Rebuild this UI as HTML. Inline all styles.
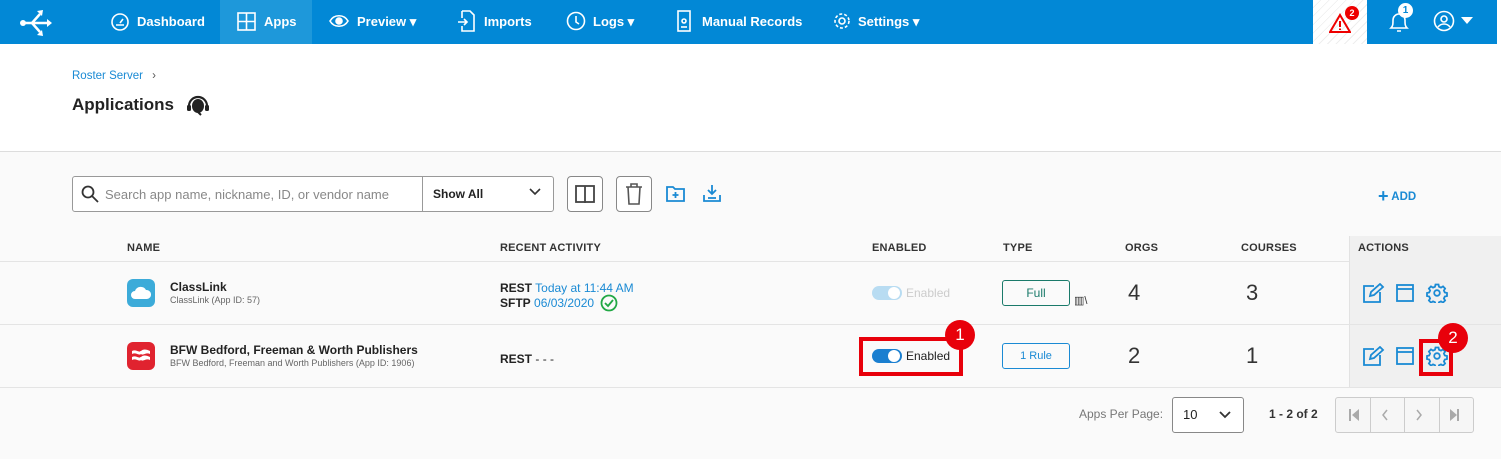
<!DOCTYPE html>
<html><head><meta charset="utf-8"><style>
*{box-sizing:border-box;margin:0;padding:0}
body{width:1501px;height:459px;overflow:hidden;background:#fafafa;font-family:"Liberation Sans",sans-serif;color:#333;position:relative;font-size:13px}
.a{position:absolute}
.nav{left:0;top:0;width:1501px;height:44px;background:#0288d6}
.ni{color:#fff;font-size:13px;font-weight:bold;top:14px;}
.hdr{left:0;top:44px;width:1501px;height:108px;background:#fff;border-bottom:1px solid #ddd}
.th{top:242px;font-size:11px;font-weight:bold;color:#333;letter-spacing:.2px}
.line{left:0;width:1501px;height:1px;background:#e4e4e4}
.blue{color:#1a8ad4}
svg{position:absolute}
</style></head><body>
<div class="a nav"></div>
<div class="a" style="left:220px;top:0;width:92px;height:44px;background:#1e98da"></div>
<svg style="left:18px;top:8px" width="36" height="30" viewBox="0 0 36 30" fill="#fff"><circle cx="5" cy="15" r="3"/><path d="M5 15h24M14 15l8-9M14 15l8 9" stroke="#fff" stroke-width="2.5" fill="none"/><path d="M29 11l5 4-5 4z M19 3l6-1-1 6z M19 27l6 1-1-6z"/></svg>
<svg style="left:110px;top:12px" width="20" height="20" viewBox="0 0 20 20" fill="none" stroke="#fff" stroke-width="1.6"><circle cx="10" cy="10" r="8"/><path d="M10 11l3-4M6 13h8"/></svg>
<div class="a ni" style="left:137px">Dashboard</div>
<svg style="left:237px;top:12px" width="19" height="19" viewBox="0 0 19 19" fill="none" stroke="#fff" stroke-width="1.6"><rect x="1" y="1" width="17" height="17"/><path d="M9.5 1v17M1 9.5h17"/></svg>
<div class="a ni" style="left:264px">Apps</div>
<svg style="left:329px;top:13px" width="20" height="16" viewBox="0 0 20 16" fill="none" stroke="#fff" stroke-width="1.6"><path d="M1 8c4-7 14-7 18 0-4 7-14 7-18 0z"/><circle cx="10" cy="8" r="3" fill="#fff"/></svg>
<div class="a ni" style="left:357px">Preview ▾</div>
<svg style="left:457px;top:10px" width="18" height="22" viewBox="0 0 18 22" fill="none" stroke="#fff" stroke-width="1.6"><path d="M5 1h8l4 4v16H5v-5M5 8V1"/><path d="M1 12h9M7 9l3 3-3 3"/></svg>
<div class="a ni" style="left:484px">Imports</div>
<svg style="left:566px;top:11px" width="20" height="20" viewBox="0 0 20 20" fill="none" stroke="#fff" stroke-width="1.6"><circle cx="10" cy="10" r="8.5"/><path d="M10 5v6l3 2"/></svg>
<div class="a ni" style="left:593px">Logs ▾</div>
<svg style="left:677px;top:10px" width="14" height="22" viewBox="0 0 14 22" fill="none" stroke="#fff" stroke-width="1.6"><rect x="1" y="1" width="12" height="20"/><circle cx="7" cy="11" r="2"/><path d="M4 17h6"/></svg>
<div class="a ni" style="left:702px">Manual Records</div>
<svg style="left:832px;top:11px" width="20" height="20" viewBox="0 0 20 20" fill="none" stroke="#fff" stroke-width="1.6"><circle cx="10" cy="10" r="3"/><circle cx="10" cy="10" r="7" stroke-dasharray="3 2"/></svg>
<div class="a ni" style="left:858px">Settings ▾</div>
<div class="a" style="left:1313px;top:0;width:54px;height:44px;background:repeating-linear-gradient(135deg,#fff 0 5px,#eee 5px 6px)"></div>
<svg style="left:1329px;top:13px" width="22" height="20" viewBox="0 0 22 20" fill="none" stroke="#e00" stroke-width="2"><path d="M11 2L1 19h20z"/><path d="M11 8v6M11 15.5v1.5"/></svg>
<div class="a" style="left:1345px;top:6px;width:14px;height:14px;border-radius:7px;background:#e00;color:#fff;font-size:9px;font-weight:bold;text-align:center;line-height:14px">2</div>
<svg style="left:1388px;top:10px" width="22" height="24" viewBox="0 0 22 24" fill="none" stroke="#fff" stroke-width="1.6"><path d="M3 18c2-2 2-4 2-8a6 6 0 0 1 12 0c0 4 0 6 2 8z M9 21h4"/></svg>
<div class="a" style="left:1398px;top:3px;width:15px;height:15px;border-radius:8px;background:#fff;color:#0288d6;font-size:10px;font-weight:bold;text-align:center;line-height:15px">1</div>
<svg style="left:1433px;top:10px" width="22" height="22" viewBox="0 0 22 22" fill="none" stroke="#fff" stroke-width="1.6"><circle cx="11" cy="11" r="9.5"/><circle cx="11" cy="9" r="3"/><path d="M5 17c3-4 9-4 12 0"/></svg>
<div class="a" style="left:1461px;top:17px;border-left:6px solid transparent;border-right:6px solid transparent;border-top:7px solid #fff"></div>
<div class="a" style="left:1497px;top:0;width:4px;height:44px;background:#fff"></div>

<div class="a hdr"></div>
<div class="a blue" style="left:72px;top:70px;font-size:11.5px">Roster Server <span style="color:#555;margin-left:6px">›</span></div>
<div class="a" style="left:72px;top:95px;font-size:17px;font-weight:bold;color:#222">Applications</div>
<svg style="left:185px;top:94px" width="26" height="22" viewBox="0 0 26 22"><path d="M4 12a9 9 0 0 1 18 0" fill="none" stroke="#222" stroke-width="2.2"/><ellipse cx="13" cy="12" rx="6" ry="7" fill="#222"/><rect x="2" y="11" width="4" height="6" rx="1.5" fill="#222"/><rect x="20" y="11" width="4" height="6" rx="1.5" fill="#222"/><path d="M13 18l3 3" stroke="#222" stroke-width="2"/></svg>

<div class="a" style="left:72px;top:176px;width:482px;height:36px;border:1px solid #999;border-radius:3px;background:#fff"></div>
<div class="a" style="left:422px;top:177px;width:1px;height:34px;background:#999"></div>
<svg style="left:81px;top:185px" width="18" height="18" viewBox="0 0 18 18" fill="none" stroke="#333" stroke-width="1.8"><circle cx="7" cy="7" r="5.5"/><path d="M11 11l6 6"/></svg>
<div class="a" style="left:105px;top:187px;color:#888;font-size:13px">Search app name, nickname, ID, or vendor name</div>
<div class="a" style="left:433px;top:187px;font-weight:bold;font-size:12px;color:#222">Show All</div>
<svg style="left:528px;top:187px" width="14" height="10" viewBox="0 0 14 10" fill="none" stroke="#333" stroke-width="1.6"><path d="M2 2l5 5 5-5"/></svg>
<div class="a" style="left:567px;top:176px;width:36px;height:36px;border:1px solid #888;border-radius:4px;background:#fff"></div>
<svg style="left:575px;top:185px" width="20" height="18" viewBox="0 0 20 18" fill="none" stroke="#444" stroke-width="1.8"><rect x="1" y="1" width="18" height="16"/><path d="M10 1v17"/></svg>
<div class="a" style="left:616px;top:176px;width:36px;height:36px;border:1px solid #888;border-radius:4px;background:#fff"></div>
<svg style="left:625px;top:183px" width="18" height="22" viewBox="0 0 18 22" fill="none" stroke="#555" stroke-width="1.6"><path d="M1 4h16M6 4V1h6v3M3 4l1 17h10l1-17"/></svg>
<svg style="left:666px;top:185px" width="19" height="17" viewBox="0 0 19 17" fill="none" stroke="#1a8ad4" stroke-width="1.8"><path d="M1 2h6l2 2h9v12H1z M9.5 7v6M6.5 10h6"/></svg>
<svg style="left:703px;top:184px" width="18" height="18" viewBox="0 0 18 18" fill="none" stroke="#1a8ad4" stroke-width="1.8"><path d="M9 1v9M5 6l4 4 4-4M1 11v6h16v-6"/><path d="M5 14h8"/></svg>
<div class="a blue" style="left:1378px;top:186px;font-weight:bold;font-size:11.5px"><span style="font-size:18px;vertical-align:-2px">+</span> ADD</div>

<div class="a" style="left:1349px;top:236px;width:152px;height:151px;background:#f0f0f0;border-left:1px solid #e2e2e2"></div>
<div class="a th" style="left:127px">NAME</div>
<div class="a th" style="left:500px">RECENT ACTIVITY</div>
<div class="a th" style="left:872px">ENABLED</div>
<div class="a th" style="left:1003px">TYPE</div>
<div class="a th" style="left:1125px">ORGS</div>
<div class="a th" style="left:1241px">COURSES</div>
<div class="a th" style="left:1358px">ACTIONS</div>
<div class="a line" style="top:261px;width:1349px"></div>
<div class="a line" style="top:324px"></div>
<div class="a line" style="top:387px"></div>

<div class="a" style="left:127px;top:279px;width:28px;height:28px;border-radius:6px;background:#3cabd9"></div>
<svg style="left:131px;top:285px" width="20" height="15" viewBox="0 0 20 15"><path d="M4 14a4 4 0 0 1 0-8 6 6 0 0 1 11-1 4.5 4.5 0 0 1 1 9z" fill="#fff"/></svg>
<div class="a" style="left:170px;top:280px;font-weight:bold;font-size:12px;color:#222">ClassLink</div>
<div class="a" style="left:170px;top:295px;font-size:9px;color:#666">ClassLink (App ID: 57)</div>
<div class="a" style="left:500px;top:281px;font-size:12px"><b style="color:#222">REST</b> <span class="blue">Today at 11:44 AM</span></div>
<div class="a" style="left:500px;top:296px;font-size:12px"><b style="color:#222">SFTP</b> <span class="blue">06/03/2020</span></div>
<svg style="left:600px;top:294px" width="18" height="18" viewBox="0 0 18 18" fill="none" stroke="#22a845" stroke-width="1.8"><circle cx="9" cy="9" r="7.5"/><path d="M5 9l3 3 5-6"/></svg>
<div class="a" style="left:872px;top:286px;width:30px;height:14px;border-radius:7px;background:#b8dcf2"></div>
<div class="a" style="left:888px;top:287px;width:12px;height:12px;border-radius:6px;background:#fff"></div>
<div class="a" style="left:906px;top:286px;color:#ccc;font-size:12px">Enabled</div>
<div class="a" style="left:1002px;top:280px;width:68px;height:26px;border:1px solid #1a7a6a;border-radius:3px;text-align:center;line-height:24px;color:#1a7a6a;font-size:12px">Full</div>
<div class="a" style="left:1074px;top:294px;font-size:11px;color:#333">▥\</div>
<div class="a" style="left:1128px;top:280px;font-size:22px;color:#333">4</div>
<div class="a" style="left:1246px;top:280px;font-size:22px;color:#333">3</div>

<div class="a" style="left:127px;top:342px;width:28px;height:28px;border-radius:6px;background:#e0232f"></div>
<svg style="left:131px;top:348px" width="20" height="16" viewBox="0 0 20 16" fill="#fff"><path d="M1 3c4-2 7 2 9 0 2-2 5-2 9 0v3c-4-2-7 2-9 0-2 2-5-2-9 0z M1 9c4-2 7 2 9 0 2-2 5-2 9 0v3c-4-2-7 2-9 0-2 2-5-2-9 0z"/></svg>
<div class="a" style="left:170px;top:343px;font-weight:bold;font-size:12px;color:#222">BFW Bedford, Freeman &amp; Worth Publishers</div>
<div class="a" style="left:170px;top:358px;font-size:9px;color:#666">BFW Bedford, Freeman and Worth Publishers (App ID: 1906)</div>
<div class="a" style="left:500px;top:352px;font-size:12px"><b style="color:#222">REST</b> <span style="color:#222">- - -</span></div>
<div class="a" style="left:872px;top:349px;width:30px;height:14px;border-radius:7px;background:#1a7fd0"></div>
<div class="a" style="left:888px;top:350px;width:12px;height:12px;border-radius:6px;background:#fff"></div>
<div class="a" style="left:906px;top:349px;color:#222;font-size:12px">Enabled</div>
<div class="a" style="left:859px;top:337px;width:104px;height:39px;border:4px solid #e8000b"></div>
<div class="a" style="left:945px;top:320px;width:30px;height:30px;border-radius:15px;background:#e8000b;color:#fff;text-align:center;line-height:30px;font-size:17px">1</div>
<div class="a" style="left:1002px;top:343px;width:68px;height:26px;border:1px solid #1a8ad4;border-radius:3px;text-align:center;line-height:24px;color:#1a8ad4;font-size:11px">1 Rule</div>
<div class="a" style="left:1128px;top:343px;font-size:22px;color:#333">2</div>
<div class="a" style="left:1246px;top:343px;font-size:22px;color:#333">1</div>

<svg style="left:1363px;top:283px" width="90" height="20" viewBox="0 0 90 20" fill="none" stroke="#1a8ad4" stroke-width="1.8"><path d="M11 3H1v16h16V9M7 13l1-4 9-8 3 3-9 8z"/><rect x="34" y="2" width="16" height="16"/><path d="M34 6h16"/><circle cx="74" cy="10" r="2.8"/><path d="M72.5 1.5h3l.5 2.2 2 .9 2-1.2 2.1 2.1-1.2 2 .9 2 2.2.5v3l-2.2.5-.9 2 1.2 2-2.1 2.1-2-1.2-2 .9-.5 2.2h-3l-.5-2.2-2-.9-2 1.2-2.1-2.1 1.2-2-.9-2-2.2-.5v-3l2.2-.5.9-2-1.2-2 2.1-2.1 2 1.2 2-.9z"/></svg>
<svg style="left:1363px;top:346px" width="90" height="20" viewBox="0 0 90 20" fill="none" stroke="#1a8ad4" stroke-width="1.8"><path d="M11 3H1v16h16V9M7 13l1-4 9-8 3 3-9 8z"/><rect x="34" y="2" width="16" height="16"/><path d="M34 6h16"/><circle cx="74" cy="10" r="2.8"/><path d="M72.5 1.5h3l.5 2.2 2 .9 2-1.2 2.1 2.1-1.2 2 .9 2 2.2.5v3l-2.2.5-.9 2 1.2 2-2.1 2.1-2-1.2-2 .9-.5 2.2h-3l-.5-2.2-2-.9-2 1.2-2.1-2.1 1.2-2-.9-2-2.2-.5v-3l2.2-.5.9-2-1.2-2 2.1-2.1 2 1.2 2-.9z"/></svg>
<div class="a" style="left:1419px;top:339px;width:34px;height:37px;border:4px solid #e8000b"></div>
<div class="a" style="left:1438px;top:323px;width:30px;height:30px;border-radius:15px;background:#e8000b;color:#fff;text-align:center;line-height:30px;font-size:17px">2</div>

<div class="a" style="left:1079px;top:407px;font-size:12px;color:#777">Apps Per Page:</div>
<div class="a" style="left:1172px;top:397px;width:72px;height:36px;border:1px solid #888;border-radius:3px;background:#fff"></div>
<div class="a" style="left:1183px;top:407px;font-size:13px;color:#222">10</div>
<svg style="left:1218px;top:410px" width="14" height="10" viewBox="0 0 14 10" fill="none" stroke="#333" stroke-width="1.8"><path d="M2 2l5 5 5-5"/></svg>
<div class="a" style="left:1269px;top:407px;font-size:12px;font-weight:bold;color:#333">1 - 2 of 2</div>
<div class="a" style="left:1335px;top:397px;width:139px;height:36px;border:1px solid #ccc;border-radius:3px;background:#f6f6f6"></div>
<div class="a" style="left:1370px;top:397px;width:1px;height:36px;background:#ccc"></div>
<div class="a" style="left:1404px;top:397px;width:1px;height:36px;background:#ccc"></div>
<div class="a" style="left:1439px;top:397px;width:1px;height:36px;background:#ccc"></div>
<svg style="left:1347px;top:408px" width="126" height="14" viewBox="0 0 126 14" fill="#aaa" stroke="#aaa"><path d="M3 1v12" stroke-width="2"/><path d="M12 1L5 7l7 6z" stroke="none"/><path d="M40 2l-4 5 4 5" fill="none" stroke-width="1.5"/><path d="M70 2l4 5-4 5" fill="none" stroke-width="1.5"/><path d="M103 1l7 6-7 6z" stroke="none"/><path d="M111 1v12" stroke-width="2"/></svg>
</body></html>
